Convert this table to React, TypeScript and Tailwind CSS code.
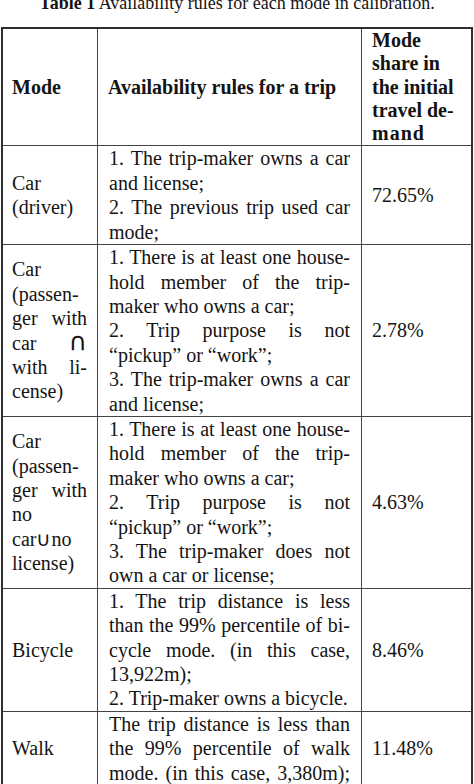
import React from "react";

interface Line {
  t: React.ReactNode;
  j?: boolean;
}

interface Row {
  mode: Line[];
  rules: Line[];
  share: string;
}

const rows: Row[] = [
  {
    mode: [{ t: "Car" }, { t: "(driver)" }],
    rules: [
      { t: "1. The trip-maker owns a car", j: true },
      { t: "and license;" },
      { t: "2. The previous trip used car", j: true },
      { t: "mode;" },
    ],
    share: "72.65%",
  },
  {
    mode: [
      { t: "Car" },
      { t: "(passen-" },
      { t: "ger with", j: true },
      {
        t: (
          <>
            car{" "}
            <span className="font-['DejaVu_Sans',sans-serif] text-[25px] leading-[0]">
              {"\u2229"}
            </span>
          </>
        ),
        j: true,
      },
      { t: "with li-", j: true },
      { t: "cense)" },
    ],
    rules: [
      { t: "1. There is at least one house-", j: true },
      { t: "hold member of the trip-", j: true },
      { t: "maker who owns a car;" },
      { t: "2. Trip purpose is not", j: true },
      { t: "\u201cpickup\u201d or \u201cwork\u201d;" },
      { t: "3. The trip-maker owns a car", j: true },
      { t: "and license;" },
    ],
    share: "2.78%",
  },
  {
    mode: [
      { t: "Car" },
      { t: "(passen-" },
      { t: "ger with", j: true },
      { t: "no" },
      { t: "car\u222ano" },
      { t: "license)" },
    ],
    rules: [
      { t: "1. There is at least one house-", j: true },
      { t: "hold member of the trip-", j: true },
      { t: "maker who owns a car;" },
      { t: "2. Trip purpose is not", j: true },
      { t: "\u201cpickup\u201d or \u201cwork\u201d;" },
      { t: "3. The trip-maker does not", j: true },
      { t: "own a car or license;" },
    ],
    share: "4.63%",
  },
  {
    mode: [{ t: "Bicycle" }],
    rules: [
      { t: "1. The trip distance is less", j: true },
      { t: "than the 99% percentile of bi-", j: true },
      { t: "cycle mode. (in this case,", j: true },
      { t: "13,922m);" },
      { t: "2. Trip-maker owns a bicycle." },
    ],
    share: "8.46%",
  },
  {
    mode: [{ t: "Walk" }],
    rules: [
      { t: "The trip distance is less than", j: true },
      { t: "the 99% percentile of walk", j: true },
      { t: "mode. (in this case, 3,380m);", j: true },
    ],
    share: "11.48%",
  },
];

function Lines({ lines }: { lines: Line[] }) {
  return (
    <>
      {lines.map((line, i) => (
        <div
          key={i}
          className={
            line.j
              ? "whitespace-nowrap text-justify [text-align-last:justify]"
              : "whitespace-nowrap text-left"
          }
        >
          {line.t}
        </div>
      ))}
    </>
  );
}

export default function App() {
  return (
    <div className="h-[784px] w-[474px] overflow-hidden bg-white font-['Liberation_Serif','Times_New_Roman',serif] text-[#141414]">
      {/* Caption, cut off at the top of the page */}
      <div className="-mt-[6px] text-center text-[18px] leading-none">
        <span className="font-bold">Table 1</span> Availability rules for each
        mode in calibration.
      </div>

      {/* Table */}
      <div className="ml-[1px] mt-[15px] w-[472px] border-x-2 border-t-2 border-[#2e2e2e] text-[20px]">
        {/* Header */}
        <div className="grid grid-cols-[94px_264px_110px] font-bold leading-[23.3px]">
          <div className="flex flex-col justify-center pl-[9px] pr-[10px]">
            Mode
          </div>
          <div className="flex flex-col justify-center border-l border-[#444] pl-[10px] pr-[11px]">
            Availability rules for a trip
          </div>
          <div className="flex flex-col justify-center border-l border-[#444] pl-[10px]">
            <div>Mode</div>
            <div>share in</div>
            <div>the initial</div>
            <div>travel de-</div>
            <div className="tracking-[1px]">mand</div>
          </div>
        </div>

        {/* Body rows */}
        {rows.map((row, idx) => (
          <div
            key={idx}
            className="grid grid-cols-[94px_264px_110px] border-t border-[#444] leading-[24.4px]"
          >
            <div className="flex flex-col justify-center pl-[9px] pr-[10px]">
              <Lines lines={row.mode} />
            </div>
            <div className="flex flex-col justify-center border-l border-[#444] pl-[11px] pr-[11px]">
              <Lines lines={row.rules} />
            </div>
            <div className="flex flex-col justify-center border-l border-[#444] pl-[10px]">
              {row.share}
            </div>
          </div>
        ))}
        <div className="h-[2px] bg-[#cfcfcf]" />
      </div>
    </div>
  );
}
